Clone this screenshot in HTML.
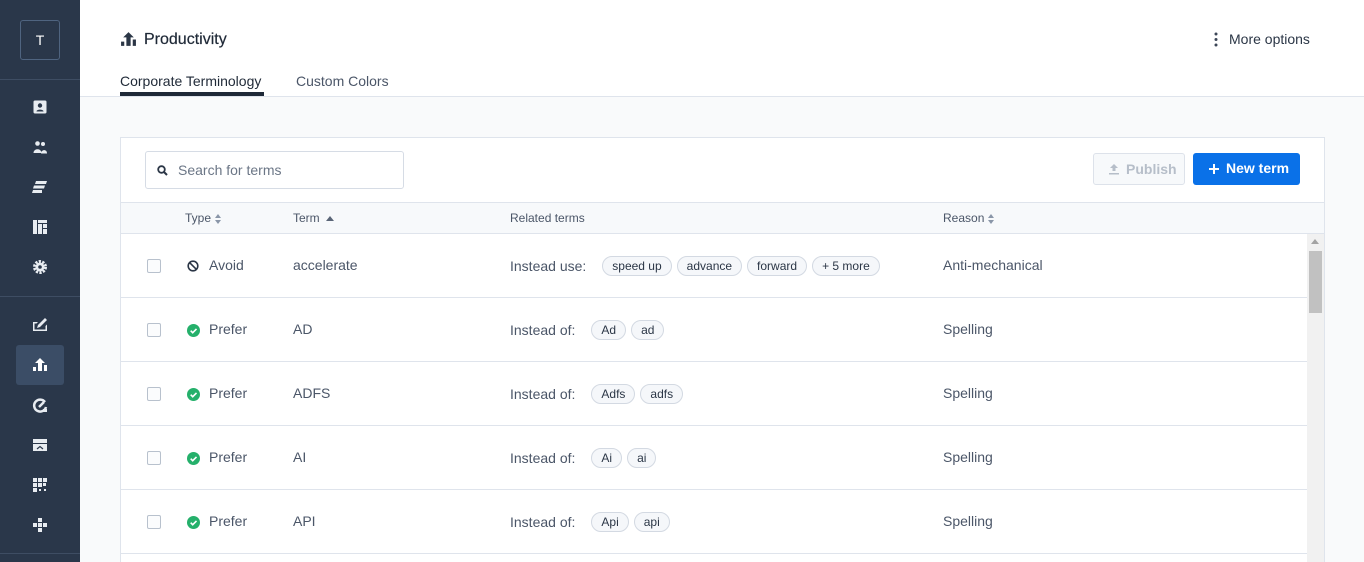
<!DOCTYPE html>
<html><head><meta charset="utf-8"><style>
*{box-sizing:border-box;margin:0;padding:0}
html,body{width:1364px;height:562px;overflow:hidden}
body{font-family:"Liberation Sans",sans-serif;background:#f9fafb;position:relative;color:#2b3646}
.sb{position:absolute;left:0;top:0;width:80px;height:562px;background:#2a374a}
.tb{position:absolute;left:20px;top:20px;width:40px;height:40px;border:1px solid #4f6480;border-radius:3px;color:#fff;font-size:14px;text-align:center;line-height:38px}
.dv{position:absolute;left:0;width:80px;height:1px;background:#3e4d63}
.ic{position:absolute;left:32px;width:16px;height:16px}
.act{position:absolute;left:16px;top:345px;width:48px;height:40px;background:#3b4d66;border-radius:3px}
.hd{position:absolute;left:80px;top:0;width:1284px;height:97px;background:#fff;border-bottom:1px solid #dfe4ec}
.t{position:absolute;font-size:14px;color:#4b5668}
.card{position:absolute;left:120px;top:137px;width:1205px;height:425px;background:#fff;border:1px solid #dfe4ec;border-bottom:none;overflow:hidden}
.srch{position:absolute;left:24px;top:13px;width:259px;height:38px;border:1px solid #d6dce5;border-radius:3px}
.th{position:absolute;left:0;top:64px;width:1203px;height:32px;background:#f7f9fb;border-top:1px solid #dfe4ec;border-bottom:1px solid #dfe4ec}
.row{position:absolute;left:0;width:1186px;height:64px;border-bottom:1px solid #dfe4ec}
.cb{position:absolute;left:26px;top:25px;width:14px;height:14px;border:1px solid #b8c1cd;border-radius:2px;background:#fbfcfd}
.rel{position:absolute;left:389px;top:0;height:63px;display:flex;align-items:center;font-size:14px;color:#4b5668}
.rel .lb{margin-right:16px}
.chip{display:inline-block;height:20px;line-height:18px;padding:0 9px;border:1px solid #d3d9e2;border-radius:10px;background:#f5f7fa;font-size:12px;color:#2b3646;margin-right:5px}
.srt{display:inline-block;vertical-align:middle;margin-left:4px}
</style></head><body>
<div class="sb">
<div class="tb">T</div>
<div class="dv" style="top:79px"></div>
<div class="dv" style="top:296px"></div>
<div class="dv" style="top:553px"></div>
<div class="act"></div>
<svg class="ic" style="top:99px" viewBox="0 0 16 16"><rect x="1.5" y="1.5" width="13" height="13" rx="1.5" fill="#e8ecf1"/><circle cx="8" cy="6.5" r="2.2" fill="#2a374a"/><path d="M4.5 12.5c0-2.5 7-2.5 7 0z" fill="#2a374a"/></svg>
<svg class="ic" style="top:139px" viewBox="0 0 16 16" fill="#e8ecf1"><circle cx="5.5" cy="4.5" r="2.3"/><circle cx="11" cy="5" r="2"/><path d="M1.5 14c0-5 8-5 8 0z"/><path d="M9 14.5c0-4 6-5 6 0z"/></svg>
<svg class="ic" style="top:179px" viewBox="0 0 16 16" fill="#e8ecf1"><path d="M4 2h11l-1 3H3z"/><path d="M2 6.5h11l-1 3H1z"/><path d="M1 11h9v3H0z"/></svg>
<svg class="ic" style="top:219px" viewBox="0 0 16 16" fill="#e8ecf1"><rect x="1" y="1" width="4" height="14"/><rect x="6" y="1" width="9" height="3"/><rect x="6" y="5" width="4" height="10"/><rect x="11" y="5" width="4" height="4"/><rect x="11" y="10" width="4" height="5"/></svg>
<svg class="ic" style="top:259px" viewBox="0 0 16 16"><circle cx="8" cy="8" r="5.5" fill="none" stroke="#e8ecf1" stroke-width="3" stroke-dasharray="2.2 1.3"/><circle cx="8" cy="8" r="4.5" fill="#e8ecf1"/><circle cx="8" cy="8" r="1.8" fill="#2a374a"/></svg>
<svg class="ic" style="top:317px" viewBox="0 0 16 16" fill="#e8ecf1"><path d="M1 5h5l-1.5 1.5H2.5v6h11V9l1.5-1.5V14H1z"/><path d="M13 1l2 2-7 7-3 1 1-3z"/></svg>
<svg class="ic" style="top:357px" viewBox="0 0 16 16" fill="#fff"><path d="M8 1l5 5h-3v8H6V6H3z"/><rect x="1" y="10" width="3" height="4"/><rect x="12" y="8" width="3" height="6"/></svg>
<svg class="ic" style="top:397px" viewBox="0 0 16 16"><path d="M13 5A6 6 0 1 0 14 10" fill="none" stroke="#e8ecf1" stroke-width="2.5"/><path d="M7 10l5-5" stroke="#e8ecf1" stroke-width="2.5"/><rect x="11" y="12" width="4" height="3" fill="#e8ecf1"/></svg>
<svg class="ic" style="top:437px" viewBox="0 0 16 16" fill="#e8ecf1"><rect x="1" y="2" width="14" height="4"/><rect x="1" y="7" width="14" height="7"/><path d="M5 12l3-2.5 3 2.5" stroke="#2a374a" stroke-width="1.2" fill="none"/></svg>
<svg class="ic" style="top:477px" viewBox="0 0 16 16" fill="#e8ecf1"><rect x="1" y="1" width="4" height="4"/><rect x="6" y="1" width="4" height="4"/><rect x="11" y="1" width="4" height="4"/><rect x="1" y="6" width="4" height="4"/><rect x="6" y="6" width="4" height="4"/><rect x="11" y="6" width="3" height="3"/><rect x="1" y="11" width="4" height="4"/><rect x="7" y="12" width="2" height="2"/><rect x="12" y="12" width="2" height="2"/></svg>
<svg class="ic" style="top:517px" viewBox="0 0 16 16" fill="#e8ecf1"><rect x="6" y="1" width="4" height="4"/><rect x="1" y="6" width="4" height="4"/><rect x="6" y="6" width="4" height="4"/><rect x="11" y="6" width="4" height="4"/><rect x="6" y="11" width="4" height="4"/></svg>
</div>
<div class="hd">
<svg style="position:absolute;left:40px;top:31px" width="17" height="17" viewBox="0 0 16 16" fill="#2b3646"><path d="M8 1l5 5h-3v8H6V6H3z"/><rect x="1" y="10" width="3" height="4"/><rect x="12" y="8" width="3" height="6"/></svg>
<div class="t" style="left:64px;top:31px;font-size:16px;color:#1f2937;-webkit-text-stroke:0.2px #1f2937">Productivity</div>
<svg style="position:absolute;left:1134px;top:32px" width="4" height="15" viewBox="0 0 4 15" fill="#3c4657"><circle cx="2" cy="2" r="1.5"/><circle cx="2" cy="7.5" r="1.5"/><circle cx="2" cy="13" r="1.5"/></svg>
<div class="t" style="left:1149px;top:31px;color:#2b3646">More options</div>
<div class="t" style="left:40px;top:73px;color:#1f2937">Corporate Terminology</div>
<div style="position:absolute;left:40px;top:92px;width:144px;height:4px;background:#1f2937"></div>
<div class="t" style="left:216px;top:73px;color:#4b5668">Custom Colors</div>
</div>
<div class="card">
<div class="srch">
<svg style="position:absolute;left:11px;top:13px" width="11" height="11" viewBox="0 0 11 11"><circle cx="4.5" cy="4.5" r="3.3" fill="none" stroke="#2b3646" stroke-width="1.8"/><path d="M7 7l3 3" stroke="#2b3646" stroke-width="2"/></svg>
<div class="t" style="left:32px;top:10px;color:#6b7686">Search for terms</div>
</div>
<div style="position:absolute;left:972px;top:15px;width:92px;height:32px;border:1px solid #dde2ea;border-radius:3px;background:#f7f9fb;color:#b6bec9;font-size:14px;font-weight:bold;line-height:30px;padding-left:32px">Publish
<svg style="position:absolute;left:14px;top:9px" width="12" height="12" viewBox="0 0 12 12" fill="#b6bec9"><path d="M6 1l4 4H7.5v3h-3V5H2z"/><rect x="1" y="10" width="10" height="1.5"/></svg></div>
<div style="position:absolute;left:1072px;top:15px;width:107px;height:32px;border-radius:3px;background:#0a71e8;color:#fff;font-size:14px;font-weight:bold;line-height:31px;padding-left:33px">New term
<svg style="position:absolute;left:15px;top:10px" width="12" height="12" viewBox="0 0 12 12"><path d="M6 1v10M1 6h10" stroke="#fff" stroke-width="2"/></svg></div>
<div class="th">
<div class="t" style="left:64px;top:8px;font-size:12px">Type<svg class="srt" width="6" height="10" viewBox="0 0 6 10" fill="#8a96a8"><path d="M3 0l3 4H0z M3 10l3-4H0z"/></svg></div>
<div class="t" style="left:172px;top:8px;font-size:12px">Term<svg class="srt" width="8" height="6" viewBox="0 0 8 6" fill="#5a6577" style="margin-left:6px"><path d="M4 0l4 5H0z"/></svg></div>
<div class="t" style="left:389px;top:8px;font-size:12px">Related terms</div>
<div class="t" style="left:822px;top:8px;font-size:12px">Reason<svg class="srt" width="6" height="10" viewBox="0 0 6 10" fill="#8a96a8"><path d="M3 0l3 4H0z M3 10l3-4H0z"/></svg></div>
</div>
<div style="position:absolute;left:1186px;top:96px;width:17px;height:340px;background:#f1f1f1"></div>
<div style="position:absolute;left:1188px;top:113px;width:13px;height:62px;background:#c1c1c1"></div>
<div style="position:absolute;left:1190px;top:101px;width:0;height:0;border-left:4px solid transparent;border-right:4px solid transparent;border-bottom:5px solid #a3a3a3"></div>

<div class="row" style="top:96px"><div class="cb"></div>
<svg style="position:absolute;left:66px;top:26px" width="12" height="12" viewBox="0 0 12 12"><circle cx="6" cy="6" r="4.8" fill="none" stroke="#2b3646" stroke-width="1.6"/><path d="M2.8 2.8l6.4 6.4" stroke="#2b3646" stroke-width="1.6"/></svg>
<div class="t" style="left:88px;top:23px">Avoid</div><div class="t" style="left:172px;top:23px">accelerate</div>
<div class="rel"><span class="lb">Instead use:</span><span class="chip">speed up</span><span class="chip">advance</span><span class="chip">forward</span><span class="chip">+ 5 more</span></div>
<div class="t" style="left:822px;top:23px">Anti-mechanical</div></div>

<div class="row" style="top:160px"><div class="cb"></div>
<svg style="position:absolute;left:66px;top:26px" width="13" height="13" viewBox="0 0 13 13"><circle cx="6.5" cy="6.5" r="6.5" fill="#25b06b"/><path d="M3.7 6.7l2 2 3.8-3.8" stroke="#fff" stroke-width="1.6" fill="none"/></svg>
<div class="t" style="left:88px;top:23px">Prefer</div><div class="t" style="left:172px;top:23px">AD</div>
<div class="rel"><span class="lb">Instead of:</span><span class="chip">Ad</span><span class="chip">ad</span></div>
<div class="t" style="left:822px;top:23px">Spelling</div></div>

<div class="row" style="top:224px"><div class="cb"></div>
<svg style="position:absolute;left:66px;top:26px" width="13" height="13" viewBox="0 0 13 13"><circle cx="6.5" cy="6.5" r="6.5" fill="#25b06b"/><path d="M3.7 6.7l2 2 3.8-3.8" stroke="#fff" stroke-width="1.6" fill="none"/></svg>
<div class="t" style="left:88px;top:23px">Prefer</div><div class="t" style="left:172px;top:23px">ADFS</div>
<div class="rel"><span class="lb">Instead of:</span><span class="chip">Adfs</span><span class="chip">adfs</span></div>
<div class="t" style="left:822px;top:23px">Spelling</div></div>

<div class="row" style="top:288px"><div class="cb"></div>
<svg style="position:absolute;left:66px;top:26px" width="13" height="13" viewBox="0 0 13 13"><circle cx="6.5" cy="6.5" r="6.5" fill="#25b06b"/><path d="M3.7 6.7l2 2 3.8-3.8" stroke="#fff" stroke-width="1.6" fill="none"/></svg>
<div class="t" style="left:88px;top:23px">Prefer</div><div class="t" style="left:172px;top:23px">AI</div>
<div class="rel"><span class="lb">Instead of:</span><span class="chip">Ai</span><span class="chip">ai</span></div>
<div class="t" style="left:822px;top:23px">Spelling</div></div>

<div class="row" style="top:352px"><div class="cb"></div>
<svg style="position:absolute;left:66px;top:26px" width="13" height="13" viewBox="0 0 13 13"><circle cx="6.5" cy="6.5" r="6.5" fill="#25b06b"/><path d="M3.7 6.7l2 2 3.8-3.8" stroke="#fff" stroke-width="1.6" fill="none"/></svg>
<div class="t" style="left:88px;top:23px">Prefer</div><div class="t" style="left:172px;top:23px">API</div>
<div class="rel"><span class="lb">Instead of:</span><span class="chip">Api</span><span class="chip">api</span></div>
<div class="t" style="left:822px;top:23px">Spelling</div></div>
</div>
</body></html>
